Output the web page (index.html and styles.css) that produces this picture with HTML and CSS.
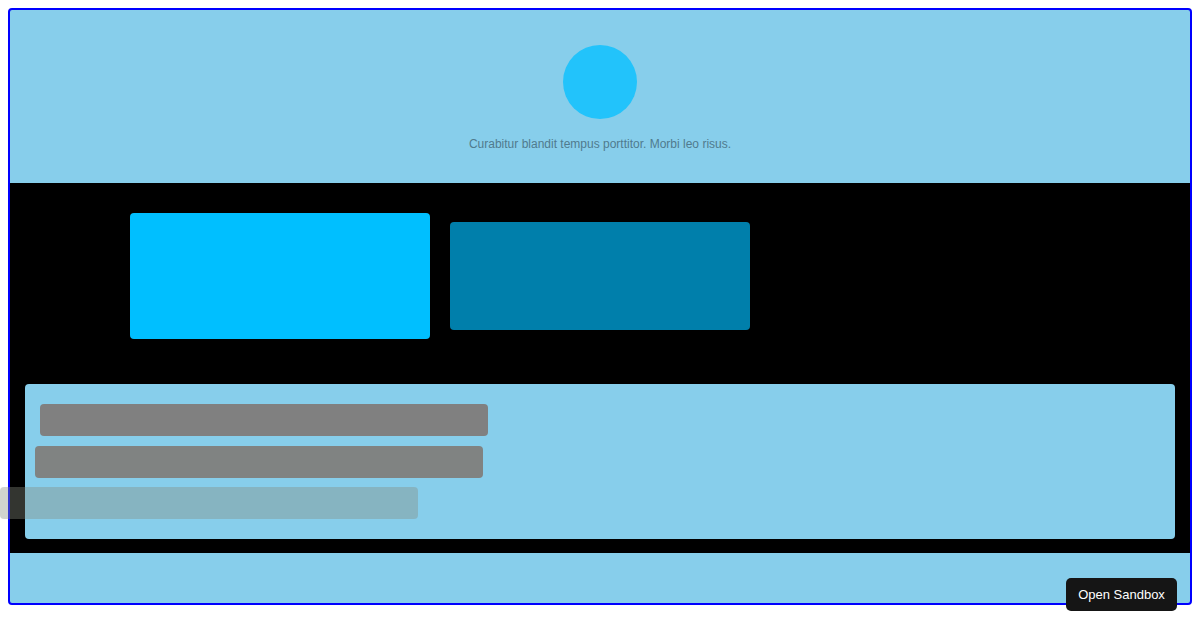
FILE: index.html
```html
<!DOCTYPE html>
<html>
<head>
<meta charset="utf-8">
<link rel="stylesheet" href="styles.css">
</head>
<body>
<div class="frame">
  <header class="hero">
    <div class="avatar"></div>
    <p class="tagline">Curabitur blandit tempus porttitor. Morbi leo risus.</p>
  </header>
  <section class="stage">
    <div class="tiles">
      <div class="tile tile-bright"></div>
      <div class="tile tile-dark"></div>
    </div>
    <div class="panel">
      <div class="bar bar-one"></div>
      <div class="bar bar-two"></div>
      <div class="bar bar-three"></div>
    </div>
  </section>
  <footer class="foot"></footer>
</div>
<button class="sandbox">Open Sandbox</button>
</body>
</html>
```
FILE: styles.css
```css
html, body {
  margin: 0;
  padding: 0;
  background: #ffffff;
}
body {
  padding: 8px;
  font-family: "Liberation Sans", Arial, sans-serif;
}
.frame {
  border: 2px solid #0000ff;
  border-radius: 4px;
  background: #87ceeb;
  width: 1180px;
  overflow: visible;
}
.hero {
  display: flex;
  flex-direction: column;
  align-items: center;
  padding: 35px 0 32px;
}
.avatar {
  width: 74px;
  height: 74px;
  border-radius: 50%;
  background: #22c3fb;
}
.tagline {
  margin: 18px 0 0;
  font-size: 12px;
  line-height: 14px;
  color: #507b8e;
}
.stage {
  background: #000000;
  padding: 30px 15px 14px;
}
.tiles {
  display: flex;
  align-items: center;
  gap: 20px;
  padding-left: 105px;
}
.tile {
  width: 300px;
  border-radius: 4px;
}
.tile-bright {
  height: 126px;
  background: #00bfff;
}
.tile-dark {
  height: 108px;
  background: #007fab;
}
.panel {
  margin-top: 45px;
  background: #87ceeb;
  border-radius: 4px;
  padding: 20px 0;
  display: flex;
  flex-direction: column;
}
.bar {
  height: 32px;
  border-radius: 4px;
}
.bar-one {
  width: 448px;
  margin-left: 15px;
  background: #808080;
}
.bar-two {
  width: 448px;
  margin-left: 10px;
  margin-top: 10px;
  background: #808382;
}
.bar-three {
  width: 418px;
  margin-left: -25px;
  margin-top: 9px;
  background: rgba(135, 140, 125, 0.38);
}
.foot {
  height: 50px;
}
.sandbox {
  position: fixed;
  right: 23px;
  bottom: 19px;
  width: 111px;
  height: 33px;
  border: none;
  border-radius: 5px;
  background: #151515;
  color: #ffffff;
  font-family: "Liberation Sans", Arial, sans-serif;
  font-size: 13px;
  padding: 0;
}
```
